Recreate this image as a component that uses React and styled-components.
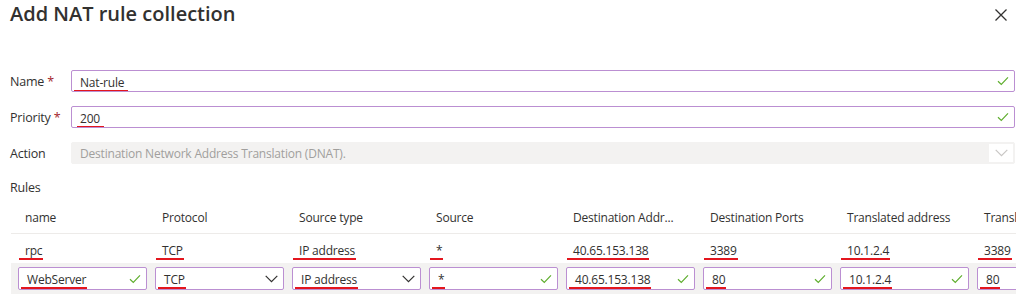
import React from "react";
import styled, { createGlobalStyle } from "styled-components";

const Global = createGlobalStyle`
  html, body { margin: 0; padding: 0; background: #fff; }
  body { font-family: "Open Sans", "Noto Sans", sans-serif; color: #323130; overflow: hidden; }
  * { box-sizing: border-box; }
`;

const Panel = styled.div`
  width: 1024px;
  height: 294px;
  overflow: hidden;
  padding: 0 9px 0 10px;
`;

const Header = styled.div`
  display: flex;
  justify-content: space-between;
  align-items: flex-start;
  height: 70px;
`;

const Title = styled.h1`
  margin: 0;
  font-size: 20px;
  line-height: 28px;
  font-weight: 600;
  color: #323130;
`;

const Close = styled.button`
  border: 0;
  background: transparent;
  padding: 0;
  margin: 8px 7px 0 0;
  width: 14px;
  height: 14px;
  display: flex;
`;

const Form = styled.div`
  display: flex;
  flex-direction: column;
  gap: 14px;
`;

const FieldRow = styled.div`
  display: flex;
  align-items: center;
  height: 22px;
`;

const Text = `
  font-size: 12px;
  letter-spacing: -0.2px;
`;

const Label = styled.label`
  width: 61px;
  flex: none;
  ${Text}
  font-size: 12.5px;
  color: #323130;
`;

const Req = styled.span`
  color: #a4262c;
  margin-left: 3px;
`;

const TextBox = styled.div`
  flex: 1;
  height: ${(p) => (p.$h ? p.$h : 22)}px;
  display: flex;
  align-items: center;
  justify-content: space-between;
  border: 1px solid ${(p) => (p.$disabled ? "#f3f2f1" : "#bb8fd2")};
  background: ${(p) => (p.$disabled ? "#f3f2f1" : "#fff")};
  border-radius: 2px;
  padding: 0 ${(p) => (p.$disabled ? 1 : 5)}px 0 8px;
  ${Text}
  color: ${(p) => (p.$disabled ? "#a19f9d" : "#323130")};
  white-space: nowrap;
  overflow: hidden;
`;

const ChevronBox = styled.span`
  width: 24px;
  height: 18px;
  background: #fff;
  display: flex;
  align-items: center;
  justify-content: center;
`;

const Mark = styled.span`
  display: inline-block;
  line-height: 15px;
  border-bottom: 2px solid #e3161e;
  padding: 0 ${(p) => (p.$r ? p.$r : 4)}px 0 ${(p) => (p.$l ? p.$l : 6)}px;
  margin-left: -${(p) => (p.$l ? p.$l : 6)}px;
  margin-top: ${(p) => (p.$bottom ? 0 : p.$down ? p.$down : 4)}px;
  align-self: ${(p) => (p.$bottom ? "flex-end" : "auto")};
`;

const RulesLabel = styled.div`
  ${Text}
  font-size: 12.5px;
  margin-top: 14px;
  height: 20px;
  line-height: 20px;
`;

const Table = styled.div`
  margin-left: 1px;
  width: 1005px;
  overflow: hidden;
`;

const Grid = styled.div`
  display: grid;
  grid-template-columns: repeat(8, 137px);
  width: 1096px;
`;

const HeadRow = styled(Grid)`
  height: 36px;
  border-bottom: 1px solid #edebe9;
  align-items: center;
  padding-top: 3px;
`;

const HeadCell = styled.div`
  padding-left: 14px;
  ${Text}
  font-weight: 500;
  color: #323130;
  white-space: nowrap;
  overflow: hidden;
`;

const DataRow = styled(Grid)`
  height: 29px;
  align-items: center;
`;

const DataCell = styled.div`
  padding-left: 14px;
  ${Text}
  white-space: nowrap;
  margin-top: 0px;
`;

const EditRow = styled(Grid)`
  background: #f3f2f1;
  height: 31px;
  align-items: center;
`;

const EditCell = styled.div`
  padding: 0 1px 0 7px;
  display: flex;
`;

const Check = () => (
  <svg width="12" height="10" viewBox="0 0 12 10">
    <path d="M1 5.2 L4.3 8.4 L11 1.4" fill="none" stroke="#5fae2e" strokeWidth="1.2" />
  </svg>
);

const Chevron = ({ color = "#323130", w = 13 }) => (
  <svg width={w} height="8" viewBox="0 0 13 8">
    <path d="M0.7 0.9 L6.5 6.7 L12.3 0.9" fill="none" stroke={color} strokeWidth="1.2" />
  </svg>
);

const headers = [
  "name",
  "Protocol",
  "Source type",
  "Source",
  "Destination Addr...",
  "Destination Ports",
  "Translated address",
  "Translated port",
];

const row1 = ["rpc", "TCP", "IP address", "*", "40.65.153.138", "3389", "10.1.2.4", "3389"];

const row2 = [
  { v: "WebServer", t: "check" },
  { v: "TCP", t: "select" },
  { v: "IP address", t: "select" },
  { v: "*", t: "check" },
  { v: "40.65.153.138", t: "check" },
  { v: "80", t: "check" },
  { v: "10.1.2.4", t: "check" },
  { v: "80", t: "check" },
];

export default function App() {
  return (
    <Panel>
      <Global />
      <Header>
        <Title>Add NAT rule collection</Title>
        <Close aria-label="Close">
          <svg width="14" height="14" viewBox="0 0 14 14">
            <path d="M1.5 1.5 L12.5 12.5 M12.5 1.5 L1.5 12.5" stroke="#323130" strokeWidth="1.3" />
          </svg>
        </Close>
      </Header>
      <Form>
        <FieldRow>
          <Label>
            Name<Req>*</Req>
          </Label>
          <TextBox>
            <Mark>Nat-rule</Mark>
            <Check />
          </TextBox>
        </FieldRow>
        <FieldRow>
          <Label>
            Priority<Req>*</Req>
          </Label>
          <TextBox>
            <Mark $l={3}>200</Mark>
            <Check />
          </TextBox>
        </FieldRow>
        <FieldRow>
          <Label>Action</Label>
          <TextBox $disabled>
            <span>Destination Network Address Translation (DNAT).</span>
            <ChevronBox>
              <Chevron color="#c8c6c4" w={13} />
            </ChevronBox>
          </TextBox>
        </FieldRow>
      </Form>
      <RulesLabel>Rules</RulesLabel>
      <Table>
        <HeadRow>
          {headers.map((h) => (
            <HeadCell key={h}>{h}</HeadCell>
          ))}
        </HeadRow>
        <DataRow>
          {row1.map((v, i) => (
            <DataCell key={i}>
              <Mark $l={6} $r={1} $down={6}>{v}</Mark>
            </DataCell>
          ))}
        </DataRow>
        <EditRow>
          {row2.map((c, i) => (
            <EditCell key={i}>
              <TextBox $h={23}>
                <Mark $l={6} $r={1} $bottom>{c.v}</Mark>
                {c.t === "check" ? <Check /> : <Chevron />}
              </TextBox>
            </EditCell>
          ))}
        </EditRow>
      </Table>
    </Panel>
  );
}
